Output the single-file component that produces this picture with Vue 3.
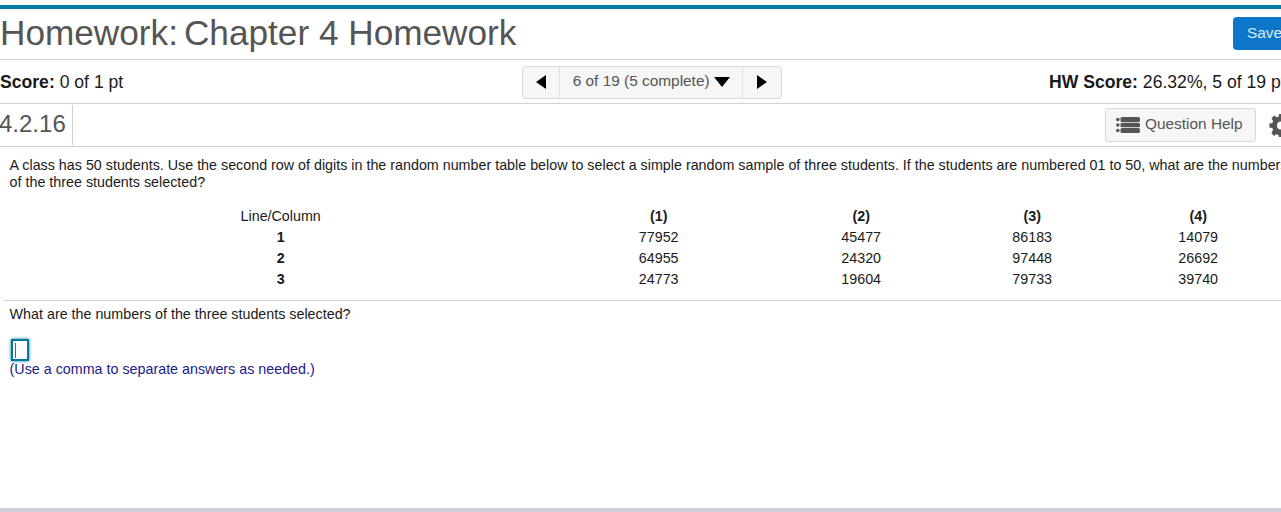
<script setup>
const rows = [
  ['1', '77952', '45477', '86183', '14079'],
  ['2', '64955', '24320', '97448', '26692'],
  ['3', '24773', '19604', '79733', '39740'],
]
const headers = ['(1)', '(2)', '(3)', '(4)']
const colWidths = [541, 215, 190, 152, 180]
</script>

<template>
  <div class="page">
    <header class="title-row">
      <h1 class="title"><span>Homework:</span><span>Chapter 4 Homework</span></h1>
      <button class="save">Save</button>
    </header>

    <div class="score-row">
      <div class="score"><b>Score:</b> 0 of 1 pt</div>
      <div class="pager">
        <span class="pg-btn pg-prev"><svg width="10" height="14" viewBox="0 0 10 14"><path d="M10 0V14L0 7Z" fill="#000"/></svg></span>
        <span class="pg-mid">6 of 19 (5 complete)<svg class="caret" width="16" height="10" viewBox="0 0 16 10"><path d="M0 0H16L8 10Z" fill="#000"/></svg></span>
        <span class="pg-btn pg-next"><svg width="10" height="14" viewBox="0 0 10 14"><path d="M0 0V14L10 7Z" fill="#000"/></svg></span>
      </div>
      <div class="hw-score"><b>HW Score:</b> 26.32%, 5 of 19 pts</div>
    </div>

    <div class="question-row">
      <div class="qnum">4.2.16</div>
      <div class="tools">
        <button class="help">
          <svg width="24" height="16" viewBox="0 0 24 16"><g fill="#555"><circle cx="1.800" cy="2.500" r="1.800"/><circle cx="1.800" cy="8" r="1.800"/><circle cx="1.800" cy="13.500" r="1.800"/><rect x="4.500" y="0" width="19.500" height="5" rx="1.500"/><rect x="4.500" y="5.700" width="19.500" height="4.600" rx="1.500"/><rect x="4.500" y="11" width="19.500" height="5" rx="1.500"/></g></svg>
          <span>Question Help</span>
        </button>
        <svg class="gear" width="24" height="24" viewBox="0 0 24 24"><path fill="#555" fill-rule="evenodd" d="M10 1h4l.6 3 2 .8 2.600-1.700 2.800 2.800-1.700 2.600.8 2 2.900.5v4l-2.900.6-.8 2 1.700 2.600-2.800 2.800-2.600-1.700-2 .8-.6 2.900h-4l-.6-2.900-2-.8-2.600 1.700L2.400 19.700l1.700-2.600-.8-2L.4 14.500v-4l2.900-.5.8-2L2.400 5.400l2.800-2.800 2.600 1.700 2-.8zM12 8.500a4 4 0 1 0 0 8 4 4 0 0 0 0-8z"/></svg>
      </div>
    </div>

    <main class="content">
      <p class="prompt">A class has 50 students. Use the second row of digits in the random number table below to select a simple random sample of three students. If the students are numbered 01 to 50, what are the numbers of the three students selected?</p>
      <table class="digits">
        <colgroup>
          <col v-for="(w, i) in colWidths" :key="i" :style="{ width: w + 'px' }">
        </colgroup>
        <thead>
          <tr>
            <th class="line-head">Line/Column</th>
            <th v-for="h in headers" :key="h">{{ h }}</th>
          </tr>
        </thead>
        <tbody>
          <tr v-for="r in rows" :key="r[0]">
            <th>{{ r[0] }}</th>
            <td v-for="c in r.slice(1)" :key="c">{{ c }}</td>
          </tr>
        </tbody>
      </table>
      <div class="rule"></div>
      <p class="ask">What are the numbers of the three students selected?</p>
      <div class="answer"><span class="cursor"></span></div>
      <p class="hint">(Use a comma to separate answers as needed.)</p>
    </main>
    <div class="footer-bar"></div>
  </div>
</template>

<style>
html, body { margin: 0; overflow: hidden; background: #fff; }
</style>

<style scoped>
.page { width: 1281px; height: 512px; display: flex; flex-direction: column; overflow: hidden; font-family: "Liberation Sans", Arial, sans-serif; color: #1a1a1a; box-sizing: border-box; padding-top: 5px; background: #fff; }
.title-row { height: 50px; flex: none; border-top: 4px solid #007fa3; border-bottom: 1px solid #ccd0dc; display: flex; justify-content: space-between; align-items: center; }
.title { margin: -2px 0 0; font-size: 35.2px; font-weight: 400; color: #555; display: flex; gap: 6px; line-height: 50px; white-space: nowrap; }
.save { width: 60px; height: 33px; margin: -2px -12px 0 0; background: #0e76c8; color: #dbeafa; border: 0; border-radius: 4px 0 0 4px; font: 15.4px "Liberation Sans", sans-serif; text-align: left; padding: 0 0 0 14px; flex: none; }
.score-row { height: 43px; flex: none; border-bottom: 1px solid #ccd0dc; display: grid; grid-template-columns: 522px 260px 1fr; align-items: center; font-size: 17.6px; }
.score { padding-top: 2px; white-space: nowrap; }
.hw-score { padding: 2px 0 0 267px; white-space: nowrap; }
.pager { display: flex; height: 33px; box-sizing: border-box; border: 1px solid #dcdcdc; border-radius: 3px; background: #f6f6f6; color: #555; font-size: 15.4px; align-items: stretch; margin-top: 1px; }
.pg-btn { display: flex; align-items: center; justify-content: center; }
.pg-prev { width: 37px; border-right: 1px solid #e2e2e2; box-sizing: border-box; }
.pg-next { width: 39px; border-left: 1px solid #e2e2e2; box-sizing: border-box; }
.pg-mid { width: 184px; box-sizing: border-box; padding: 0 0 2px 13px; display: flex; align-items: center; gap: 4px; white-space: nowrap; }
.caret { margin-top: 2px; }
.question-row { height: 42px; flex: none; border-bottom: 1px solid #ccd0dc; display: flex; justify-content: space-between; align-items: stretch; }
.qnum { width: 73px; margin: 1px 0; box-sizing: border-box; border-right: 1px solid #ccd0dc; font-size: 24px; color: #555; line-height: 38px; white-space: nowrap; text-indent: -1px; }
.tools { display: flex; align-items: center; gap: 13px; margin-right: -12px; }
.help { width: 151px; height: 34px; box-sizing: border-box; background: #f6f6f6; border: 1px solid #d8d8d8; border-radius: 3px; color: #555; display: flex; align-items: center; gap: 5px; padding: 0 0 3px 10px; font: 15.4px "Liberation Sans", sans-serif; }
.help svg { margin-top: 3px; }
.gear { flex: none; }
.content { flex: 1; min-height: 0; padding: 10px 0 0 9.600px; font-size: 14.3px; line-height: 17px; }
.content p { margin: 0; }
.prompt { width: 1278px; }
.digits { border-collapse: collapse; table-layout: fixed; width: 1278px; margin: 15px 0 0 0.600px; font-size: 14.3px; line-height: 21px; }
.digits th, .digits td { padding: 0; text-align: center; }
.digits th { font-weight: 700; }
.digits th.line-head { font-weight: 400; }
.rule { height: 1px; background: #ccd0dc; margin: 10px 0 0 -7px; width: 1278px; }
.ask { margin-top: 5px !important; }
.answer { width: 18px; height: 22px; box-sizing: border-box; border: 2px solid #00789f; box-shadow: 0 0 3px #00789f; margin: 16px 0 0 1.400px; position: relative; background: #fff; }
.cursor { position: absolute; left: 2px; top: 2px; width: 1px; height: 15px; background: #1a6fd0; }
.hint { color: #1a1a8c; }
.footer-bar { height: 4px; background: #ccd0dc; flex: none; }
</style>
